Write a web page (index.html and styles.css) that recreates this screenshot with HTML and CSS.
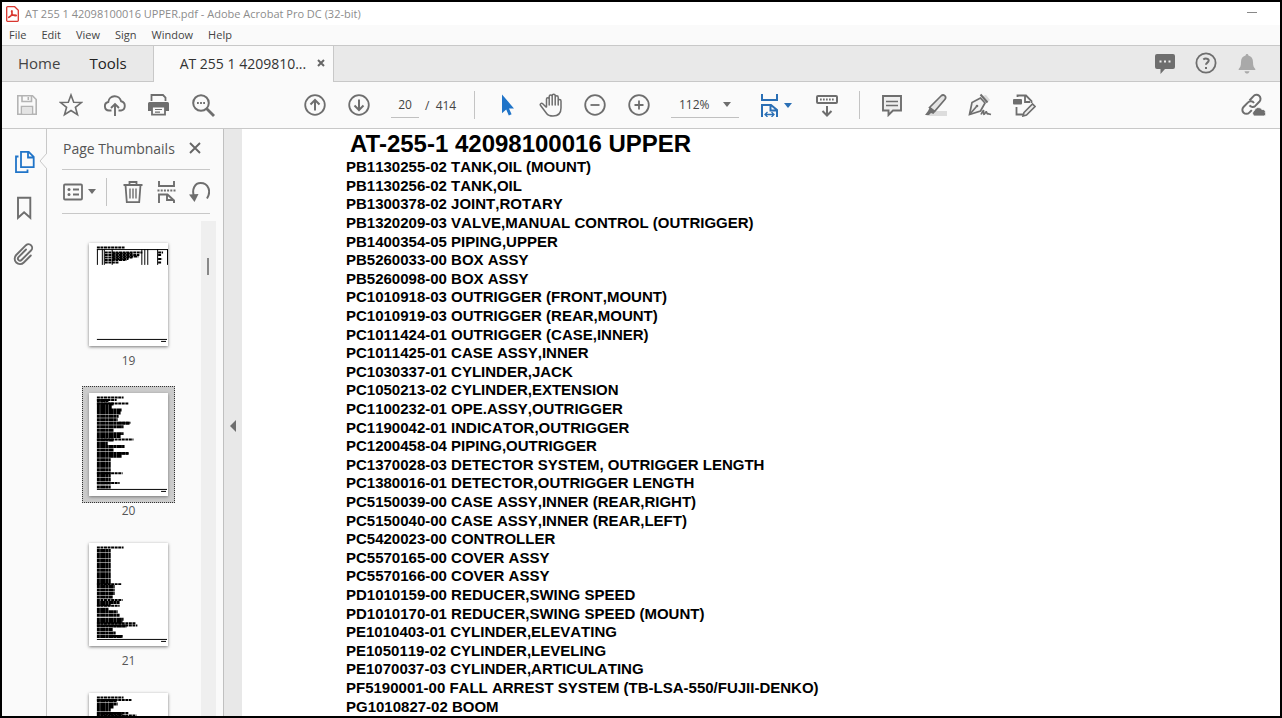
FILE: index.html
```html
<!DOCTYPE html>
<html lang="en">
<head>
<meta charset="utf-8">
<title>AT 255 1 42098100016 UPPER.pdf - Adobe Acrobat Pro DC (32-bit)</title>
<link rel="stylesheet" href="styles.css">
</head>
<body>
<div class="app">
  <header class="titlebar">
    <svg class="app-icon" width="13" height="16" viewBox="0 0 13 16"><path d="M1.500.7h7.200L12.300 4.300v10.200a.8.8 0 0 1-.8.8h-10a.8.8 0 0 1-.8-.8V1.500a.8.8 0 0 1 .8-.8z" fill="#fff" stroke="#d8362f" stroke-width="1.300"/><path d="M3 11.500c1.800-1 3.500-4 3.200-6.300-.2-1-1-.6-.7.6.5 2.100 2.200 3.900 4.200 4 1 0 .9-.9-.3-.9-2.300-.1-4.200.5-6 1.600-.8.500-1 1.200-.4 1z" fill="none" stroke="#d8362f" stroke-width="1.300"/></svg>
    <h1 class="app-title">AT 255 1 42098100016 UPPER.pdf - Adobe Acrobat Pro DC (32-bit)</h1>
    <button class="minimize" aria-label="Minimize"><svg width="10" height="10" viewBox="0 0 10 10"><path d="M0 3.500h10" stroke="#888"/></svg></button>
  </header>
  <nav class="menubar">
    <button>File</button><button>Edit</button><button>View</button><button>Sign</button><button>Window</button><button>Help</button>
  </nav>
  <div class="tabs">
    <button class="tab">Home</button>
    <button class="tab tab-tools">Tools</button>
    <div class="tab-doc">
      <button class="tab-name">AT 255 1 4209810...</button>
      <button class="tab-close" aria-label="Close tab"><svg width="8" height="8" viewBox="0 0 8 8"><path d="M1 1l6 6M7 1L1 7" stroke="#666" stroke-width="2"/></svg></button>
    </div>
    <div class="tab-actions">
      <button class="icon" aria-label="Comments"><svg width="24" height="24" viewBox="0 0 24 24"><path d="M4 3h16a2 2 0 0 1 2 2v11a2 2 0 0 1-2 2h-8l-4.500 5v-5H4a2 2 0 0 1-2-2V5a2 2 0 0 1 2-2z" fill="#6e6e6e"/><path d="M6.500 9.500h2v2h-2zm4.500 0h2v2h-2zm4.500 0h2v2h-2z" fill="#eee"/></svg></button>
      <button class="icon" aria-label="Help"><svg width="24" height="24" viewBox="0 0 24 24" fill="none" stroke="#6e6e6e" stroke-width="1.800"><circle cx="12" cy="12" r="9.600"/><path d="M9.300 8.500c2-1.500 5.400-1.100 5.400 1.100 0 2-2.700 2.100-2.700 4.100" stroke-width="2"/><path d="M11 16h2v2h-2z" fill="#6e6e6e" stroke="none"/></svg></button>
      <button class="icon" aria-label="Notifications"><svg width="24" height="24" viewBox="0 0 24 24" fill="#a9a9a9"><path d="M12 3c.9 0 1.400.6 1.400 1.500 3.200.8 4.600 3.300 4.600 6.500 0 4 .8 5.500 2.300 7v1H3.700v-1C5.200 16.500 6 15 6 11c0-3.200 1.400-5.700 4.600-6.500C10.600 3.600 11.100 3 12 3zM9.500 20.200h5c-.4 1.600-1.400 2.300-2.500 2.300s-2.100-.7-2.500-2.300z"/></svg></button>
    </div>
  </div>
  <div class="toolbar">
    <button class="icon" aria-label="Save"><svg width="24" height="24" viewBox="0 0 24 24" fill="none" stroke="#b4b4b4" stroke-width="1.600"><path d="M2.800 2.800h14.700l3.700 3.700v14.700H2.800z"/><path d="M7 3v5.500h9.500V3M6.500 21v-7.500h11V21"/><path d="M7.300 14.300h9.400v6.200H7.300z" fill="#e4e4e4" stroke="none"/><path d="M13.300 4v3"/></svg></button>
    <button class="icon" aria-label="Star"><svg width="24" height="24" viewBox="0 0 24 24" fill="none" stroke="#6e6e6e" stroke-width="1.600"><path d="M12 2l2.700 7.200 7.700.3-6 4.800 2.100 7.400L12 17.500l-6.500 4.200 2.100-7.400-6-4.800 7.700-.3z"/></svg></button>
    <button class="icon" aria-label="Upload"><svg width="24" height="24" viewBox="0 0 24 24" fill="none" stroke="#6e6e6e" stroke-width="1.900"><path d="M8.500 17.500H6a4.300 4.300 0 0 1-.7-8.500 6.500 6.500 0 0 1 12.800-.7A4.700 4.700 0 0 1 18 17.500h-2.500"/><path d="M12 23V11.500M8 15l4-4 4 4"/></svg></button>
    <button class="icon" aria-label="Print"><svg width="24" height="24" viewBox="0 0 24 24"><path d="M4.500 8V2h11.500l2.500 2.500V8" fill="none" stroke="#6e6e6e" stroke-width="1.800"/><path d="M2.500 9h18a1.500 1.500 0 0 1 1.500 1.500V18H1v-7.500A1.500 1.500 0 0 1 2.500 9z" fill="#6e6e6e"/><path d="M5 13.500h13v8.200H5z" fill="#fafafa" stroke="#6e6e6e" stroke-width="1.800"/><path d="M8 16.500h7m-7 2.700h5" stroke="#6e6e6e" stroke-width="1.200"/></svg></button>
    <button class="icon" aria-label="Find"><svg width="24" height="24" viewBox="0 0 24 24" fill="none" stroke="#6e6e6e"><circle cx="10" cy="10" r="7.800" stroke-width="2"/><path d="M15.500 15.500l7.500 7.500" stroke-width="2.800"/><path d="M6 10h8" stroke-width="1.800" stroke-dasharray="1.800 1.300"/></svg></button>
    <button class="icon page-up" aria-label="Previous page"><svg width="24" height="24" viewBox="0 0 24 24" fill="none" stroke="#6e6e6e" stroke-width="1.800"><circle cx="12" cy="12" r="9.800"/><path d="M12 17.500V7M7.500 11.500L12 7l4.500 4.500" stroke-width="2"/></svg></button>
    <button class="icon" aria-label="Next page"><svg width="24" height="24" viewBox="0 0 24 24" fill="none" stroke="#6e6e6e" stroke-width="1.800"><circle cx="12" cy="12" r="9.800"/><path d="M12 6.500V17M7.500 12.500L12 17l4.500-4.500" stroke-width="2"/></svg></button>
    <div class="page-group"><input class="page-input" type="text" value="20" aria-label="Page number"><span>/&nbsp; 414</span></div>
    <span class="sep"></span>
    <button class="icon" aria-label="Select"><svg width="24" height="24" viewBox="0 0 24 24"><path d="M7 1.500v18.800l4.200-3.700 2.600 5.900 2.800-1.300-2.600-5.700h5z" fill="#2074c8"/></svg></button>
    <button class="icon" aria-label="Hand"><svg width="24" height="24" viewBox="0 0 24 24" fill="none" stroke="#6e6e6e" stroke-width="1.500" stroke-linecap="round" stroke-linejoin="round"><path d="M7 14L3.700 10.700c-1.500-1-3.200.4-2.100 1.800l6 8C9 22.500 11 23 14 23c5 0 8-2.500 8-8V8c0-2-2.800-2-2.800 0v4V4.500c0-2.200-3-2.200-3 0V12 2.700c0-2.100-3-2.100-3 0V12 3.500c0-2-3-2-3 0V12 6c0-1.800-2.700-1.800-2.700 0v8"/></svg></button>
    <button class="icon" aria-label="Zoom out"><svg width="24" height="24" viewBox="0 0 24 24" fill="none" stroke="#6e6e6e" stroke-width="1.800"><circle cx="12" cy="12" r="9.800"/><path d="M7.500 12h9"/></svg></button>
    <button class="icon" aria-label="Zoom in"><svg width="24" height="24" viewBox="0 0 24 24" fill="none" stroke="#6e6e6e" stroke-width="1.800"><circle cx="12" cy="12" r="9.800"/><path d="M7.500 12h9M12 7.500v9"/></svg></button>
    <label class="zoom"><select class="zoom-select" aria-label="Zoom level"><option>112%</option></select><svg width="8" height="5" viewBox="0 0 8 5"><path d="M0 0h8L4 5z" fill="#6e6e6e"/></svg></label>
    <button class="fit" aria-label="Fit width"><svg width="22" height="24" viewBox="0 0 22 24" fill="none" stroke="#2a6fb5" stroke-width="2"><path d="M3 1v6h15V1M3 24V12h9l6 5v7M11.500 12v5.500H18"/><path d="M6 21.500h9M8.500 19L6 21.500 8.500 24M12.500 19l2.500 2.500-2.500 2.500" stroke-width="1.300"/></svg><svg width="8" height="5" viewBox="0 0 8 5"><path d="M0 0h8L4 5z" fill="#2a6fb5"/></svg></button>
    <button class="icon" aria-label="Read mode"><svg width="24" height="24" viewBox="0 0 24 24" fill="none" stroke="#6e6e6e" stroke-width="2"><rect x="2" y="3" width="20" height="7" rx="1"/><path d="M5 6.500h14" stroke-dasharray="1.700 1.300"/><path d="M12 13v9M7.500 18l4.500 4.500 4.500-4.500"/></svg></button>
    <span class="sep"></span>
    <button class="icon" aria-label="Comment"><svg width="24" height="24" viewBox="0 0 24 24" fill="#eee" stroke="#6e6e6e" stroke-width="1.900"><path d="M3 3h18v14.500h-8L8.500 22v-4.500H3z"/><path d="M6 8.500h12M6 12.500h12" stroke-width="1.300"/></svg></button>
    <button class="icon" aria-label="Highlight"><svg width="24" height="24" viewBox="0 0 24 24"><path d="M8 18h15v5H2z" fill="#dcdcdc"/><path d="M5.500 14.500L17 3c2.500-2.400 6 .4 4 3.300L10.500 18.500z" fill="#e4e4e4" stroke="#6e6e6e" stroke-width="1.700"/><path d="M6 14l5 4-1.500 3L7 20l-2 2H1l3-4z" fill="#6e6e6e"/></svg></button>
    <button class="icon" aria-label="Sign"><svg width="24" height="24" viewBox="0 0 24 24" fill="none" stroke="#6e6e6e" stroke-width="1.700"><path d="M14 3l4-1 4 5-4 3z" fill="#dcdcdc" stroke="none"/><path d="M12.500 1.500l7 8" stroke-width="2"/><path d="M12.500 5L4 9.500 1.500 21.500l11-3.500L17 10z" fill="#f2f2f2"/><path d="M2 21l6.500-7.500"/><circle cx="9" cy="13" r="1.300" fill="#6e6e6e" stroke="none"/><path d="M13 21.500c2-4.500 3-5 2.500-2.300s.5 3 2 .3 1 2.500 2.500 1.200l3 .8" stroke-width="1.600"/></svg></button>
    <button class="icon" aria-label="Edit document"><svg width="24" height="24" viewBox="0 0 24 24" fill="none" stroke="#6e6e6e" stroke-width="1.800"><path d="M5.500 4V2.500H14l5.500 5.500v2M13 2.500v6.500h5M4.500 14v7.500H11"/><rect x="1" y="6" width="9" height="5.500" rx="1" fill="#6e6e6e" stroke="none"/><path d="M12 19.500l8.500-8.500 2.500 2.500-8.500 8.500-3.500 1z" fill="#eee" stroke-width="1.600"/></svg></button>
    <button class="icon share" aria-label="Share link"><svg width="26" height="24" viewBox="0 0 26 24" fill="none" stroke="#6e6e6e" stroke-width="2"><path d="M9.500 7.500l4-4.300a4 4 0 0 1 6 5.300l-4.200 4.400a4 4 0 0 1-5.800-.5"/><path d="M14 10a4 4 0 0 0-6.200-.4L3.500 14a4 4 0 0 0 5.800 5.600l2.500-2.500"/><path d="M14.500 23a2.800 2.800 0 0 1-.3-5.200 4.300 4.300 0 0 1 7.800-1.300c2.700-.3 3.800 1.500 3.200 3 1 1.500.3 3.500-1.400 3.500z" fill="#6e6e6e" stroke="#fafafa" stroke-width=".8"/></svg></button>
  </div>
  <main class="workspace">
    <aside class="rail">
      <button class="icon" aria-label="Page thumbnails"><svg width="24" height="24" viewBox="0 0 24 24" fill="none" stroke="#2074c8" stroke-width="1.800"><path d="M9 1.800h7.700l5 5v10.400H9zM16 2v5.500h5.500"/><path d="M6.500 6.500H4v15.700h11.500V19.500"/></svg></button>
      <button class="icon" aria-label="Bookmarks"><svg width="24" height="24" viewBox="0 0 24 24" fill="none" stroke="#6e6e6e" stroke-width="1.900"><path d="M6 1.800h12.300v20l-6.200-5.500L6 21.800z"/></svg></button>
      <button class="icon" aria-label="Attachments"><svg width="24" height="24" viewBox="0 0 24 24" fill="none" stroke="#6e6e6e" stroke-width="1.900" stroke-linecap="round"><path d="M14 7.500l-7.500 7.700a2 2 0 0 0 3 2.800L19 8.500a3.600 3.600 0 0 0-5-5.300L4.200 13a5.300 5.300 0 0 0 7.600 7.500l7-7"/></svg></button>
      <svg class="notch" width="8" height="16" viewBox="0 0 8 16"><path d="M8 0L1 8l7 8" fill="#fafafa" stroke="#c8c8c8"/></svg>
    </aside>
    <section class="panel">
      <div class="panel-head">
        <h2 class="panel-title">Page Thumbnails</h2>
        <button class="panel-close" aria-label="Close panel"><svg width="12" height="12" viewBox="0 0 12 12"><path d="M1 1l10 10M11 1L1 11" stroke="#666" stroke-width="1.900"/></svg></button>
      </div>
      <div class="panel-tools">
        <button class="options" aria-label="Options"><svg width="20" height="18" viewBox="0 0 20 18" fill="none" stroke="#6e6e6e" stroke-width="1.800"><rect x="1" y="1.500" width="18" height="15" rx="1"/><path d="M10 6.500h6M10 11.500h6"/><circle cx="6" cy="6.500" r="1.500" fill="#6e6e6e" stroke="none"/><circle cx="6" cy="11.500" r="1.500" fill="#6e6e6e" stroke="none"/></svg><svg width="8" height="5" viewBox="0 0 8 5"><path d="M0 0h8L4 5z" fill="#6e6e6e"/></svg></button>
        <span class="sep"></span>
        <button class="icon first-tool" aria-label="Delete pages"><svg width="24" height="24" viewBox="0 0 24 24" fill="none" stroke="#6e6e6e" stroke-width="1.800"><path d="M2.500 5h19M8.500 5V2h7v3M4.500 5l1.300 17.200h12.400L19.500 5"/><path d="M9 8.500v10M12 8.500v10M15 8.500v10" stroke-width="1.400"/></svg></button>
        <button class="icon" aria-label="Split pages"><svg width="24" height="24" viewBox="0 0 24 24" fill="none" stroke="#6e6e6e" stroke-width="1.900"><path d="M4 1v5h15V1M4 23v-8.500h8.500l6.500 6V23M12 14.500V20h6"/><path d="M2.500 10.500h18" stroke-dasharray="2 1.200"/></svg></button>
        <button class="icon" aria-label="Rotate"><svg width="24" height="24" viewBox="0 0 24 24" fill="none" stroke="#6e6e6e" stroke-width="2"><path d="M5 16.500C2.500 9 6 3 11.500 3c8 0 11 8.500 6.500 15.500"/><path d="M0 14.500l9.500-.5L5.500 22z" fill="#6e6e6e" stroke="none"/></svg></button>
      </div>
      <div class="panel-body">
        <div class="thumbs">
          <figure class="thumb"><div class="thumb-box"><svg class="sheet" viewBox="0 0 80 104"><path class="thin" d="M8 4.500h28M16 9.500h38M16 12h35M16 14.500h28M16 17h22M16 19.500h14M70 9.500h5M70 12h3M70 16h4M70 19.500h3"/><path class="thin" d="M24 10.500h20M24 13.500h26M24 16h16"/><path class="rule" d="M8 6.500h72M8 97.500h71M8.500 6v16M13.500 6v16M15.500 6v16M23.500 6v16M53.500 6v16M56.500 6v16M59.500 6v16M69.500 6v16M79.500 6v16"/><path class="tiny" d="M73 99.500h5"/></svg></div><figcaption>19</figcaption></figure>
          <figure class="thumb selected"><div class="thumb-box"><svg class="sheet" viewBox="0 0 80 104"><path class="thin" d="M8 4.500h27M8 7h20M8 10.500h32M8 47h37M8 81h26M8 91h23M30 61h10M30 30h12"/><path class="ink" d="M8 7.500h12M8 11h17M8 14h15M8 17h25M8 20h24M8 23.500h22M8 27h21M8 30.500h33M8 34h27M8 37.500h17M8 41h27M8 44h24M8 47.500h17M8 51h11M8 54h28M8 57.500h17M8 61h32M8 64h25M8 67.500h14M8 71h14M8 74h14M8 77.500h14M8 81h14M8 84h14M8 87.500h14M8 91h14M8 95h14"/><path class="rule" d="M8 97.500h71"/><path class="tiny" d="M73 99.500h5"/></svg></div><figcaption>20</figcaption></figure>
          <figure class="thumb"><div class="thumb-box"><svg class="sheet" viewBox="0 0 80 104"><path class="thin" d="M8 4.500h27M8 41.500h25M8 57.500h26M8 63.500h23M8 81h39M8 83.500h41M20 94h14"/><path class="ink" d="M8 7.500h14M8 11h14M8 14h14M8 17.500h14M8 21h14M8 24h14M8 27.500h14M8 31h14M8 34h14M8 37.500h14M8 40.500h14M8 44h18M8 47.500h18M8 51h18M8 54.500h16M8 60h23M8 62.500h14M8 67h12M8 69.500h21M8 73h23M8 77h27M8 80h26M8 84h30M8 87.500h16M8 91h19M8 94.500h26"/><path class="rule" d="M8 97.500h71"/><path class="tiny" d="M73 99.500h5"/></svg></div><figcaption>21</figcaption></figure>
          <figure class="thumb"><div class="thumb-box"><svg class="sheet" viewBox="0 0 80 104"><path class="thin" d="M8 4.500h27M8 7h35M8 20h32M8 22.500h40"/><path class="ink" d="M8 7.500h20M8 11h21M8 14h17M8 17h14M8 20.500h26M8 24h30M8 28h20M8 32h24"/></svg></div></figure>
        </div>
        <div class="track"><div class="track-thumb"></div></div>
      </div>
    </section>
    <button class="collapse" aria-label="Collapse panel"><svg width="6" height="12" viewBox="0 0 6 12"><path d="M6 0v12L0 6z" fill="#6e6e6e"/></svg></button>
    <article class="document">
      <h2 class="doc-title">AT-255-1 42098100016 UPPER</h2>
      <ul class="parts">
        <li>PB1130255-02 TANK,OIL (MOUNT)</li>
        <li>PB1130256-02 TANK,OIL</li>
        <li>PB1300378-02 JOINT,ROTARY</li>
        <li>PB1320209-03 VALVE,MANUAL CONTROL (OUTRIGGER)</li>
        <li>PB1400354-05 PIPING,UPPER</li>
        <li>PB5260033-00 BOX ASSY</li>
        <li>PB5260098-00 BOX ASSY</li>
        <li>PC1010918-03 OUTRIGGER (FRONT,MOUNT)</li>
        <li>PC1010919-03 OUTRIGGER (REAR,MOUNT)</li>
        <li>PC1011424-01 OUTRIGGER (CASE,INNER)</li>
        <li>PC1011425-01 CASE ASSY,INNER</li>
        <li>PC1030337-01 CYLINDER,JACK</li>
        <li>PC1050213-02 CYLINDER,EXTENSION</li>
        <li>PC1100232-01 OPE.ASSY,OUTRIGGER</li>
        <li>PC1190042-01 INDICATOR,OUTRIGGER</li>
        <li>PC1200458-04 PIPING,OUTRIGGER</li>
        <li>PC1370028-03 DETECTOR SYSTEM, OUTRIGGER LENGTH</li>
        <li>PC1380016-01 DETECTOR,OUTRIGGER LENGTH</li>
        <li>PC5150039-00 CASE ASSY,INNER (REAR,RIGHT)</li>
        <li>PC5150040-00 CASE ASSY,INNER (REAR,LEFT)</li>
        <li>PC5420023-00 CONTROLLER</li>
        <li>PC5570165-00 COVER ASSY</li>
        <li>PC5570166-00 COVER ASSY</li>
        <li>PD1010159-00 REDUCER,SWING SPEED</li>
        <li>PD1010170-01 REDUCER,SWING SPEED (MOUNT)</li>
        <li>PE1010403-01 CYLINDER,ELEVATING</li>
        <li>PE1050119-02 CYLINDER,LEVELING</li>
        <li>PE1070037-03 CYLINDER,ARTICULATING</li>
        <li>PF5190001-00 FALL ARREST SYSTEM (TB-LSA-550/FUJII-DENKO)</li>
        <li>PG1010827-02 BOOM</li>
      </ul>
    </article>
  </main>
</div>
</body>
</html>
```

FILE: styles.css
```css
* { box-sizing: border-box; }
body { margin: 0; font-family: "Open Sans", "Noto Sans", sans-serif; font-size: 12px; color: #444; }
h1, h2, ul, figure { margin: 0; padding: 0; }
button, input, select { margin: 0; padding: 0; border: 0; background: none; font: inherit; color: inherit; }
svg { display: block; flex: none; }

.app { display: flex; flex-direction: column; height: 100vh; border: 2px solid #000; background: #fafafa; overflow: hidden; }
.titlebar { display: flex; align-items: center; height: 23px; flex: none; padding: 0 23px 0 4px; background: #fff; }
.app-title { flex: 1; margin-left: 6px; font-size: 11px; font-weight: normal; color: #8c8c8c; white-space: nowrap; }
.menubar { display: flex; align-items: center; gap: 15px; height: 20px; flex: none; padding: 0 7px 2px; font-size: 11px; }

.tabs { display: flex; height: 37px; flex: none; background: #e9e9e9; border-top: 1px solid #c8c8c8; box-shadow: inset 0 -1px #c8c8c8; font-size: 15px; }
.tab { padding: 0 0 2px 16px; text-align: left; }
.tab-tools { padding-left: 29px; color: #222; }
.tab-doc { display: flex; align-items: center; justify-content: space-between; width: 181px; margin-left: 26px; padding: 0 8px 2px 26px; background: #fafafa; border: 1px solid #c8c8c8; border-width: 0 1px; color: #333; font-size: 14px; }
.tab-actions { display: flex; align-items: center; gap: 17px; margin-left: auto; padding: 0 21px 2px 0; }
.icon { display: flex; align-items: center; justify-content: center; width: 24px; height: 24px; flex: none; }

.toolbar { display: flex; align-items: center; gap: 20px; height: 47px; flex: none; padding: 0 15px 0 13px; border-bottom: 1px solid #c8c8c8; }
.page-up { margin-left: 68px; }
.page-group { display: flex; align-items: center; gap: 6px; width: 63px; white-space: nowrap; }
.page-input { width: 28px; height: 26px; text-align: center; border-bottom: 1px solid #c0c0c0; }
.sep { width: 1px; height: 28px; background: #c4c4c4; flex: none; }
.zoom { display: flex; align-items: center; width: 68px; height: 26px; padding: 0 8px; border-bottom: 1px solid #c0c0c0; }
.zoom-select { appearance: none; flex: 1; min-width: 0; }
.fit { display: flex; align-items: center; justify-content: space-between; width: 36px; padding-right: 3px; }
.share { margin-left: auto; }

.workspace { display: flex; flex: 1; min-height: 0; }
.rail { position: relative; display: flex; flex-direction: column; align-items: center; gap: 22px; width: 45px; flex: none; padding-top: 21px; border-right: 1px solid #c8c8c8; }
.notch { position: absolute; right: -1px; top: 24px; }
.panel { display: flex; flex-direction: column; width: 177px; flex: none; border-right: 1px solid #c0c0c0; }
.panel-head, .panel-tools { display: flex; align-items: center; flex: none; margin: 0 13px 0 15px; border-bottom: 1px solid #c8c8c8; }
.panel-head { height: 41px; justify-content: space-between; padding: 0 9px 2px 1px; }
.panel-title { font-size: 14px; font-weight: normal; color: #555; white-space: nowrap; }
.panel-tools { height: 44px; gap: 10px; padding-left: 1px; overflow: hidden; }
.options { display: flex; align-items: center; gap: 5px; flex: none; }
.first-tool { margin-left: 4px; }
.panel-body { display: flex; flex: 1; min-height: 0; }
.thumbs { display: flex; flex-direction: column; align-items: center; gap: 17px; flex: 1; padding: 22px 0 0 9px; overflow: hidden; }
.thumb { flex: none; text-align: center; line-height: 16px; color: #555; }
.thumb-box { padding: 6px; border: 1px solid transparent; }
.selected .thumb-box { background: #cbcbcb; border: 1px dotted #333; }
.sheet { width: 79px; height: 103px; background: #fff; box-shadow: 0 1px 3px #777; }
.ink { fill: none; stroke: #000; stroke-width: 3; stroke-dasharray: 3 .3 5 .2; }
.thin { fill: none; stroke: #000; stroke-width: 2; stroke-dasharray: 3 .6; }
.rule { fill: none; stroke: #000; stroke-width: 1; }
.tiny { fill: none; stroke: #000; stroke-width: 1; }
.track { width: 15px; flex: none; margin: 7px 7px 0 0; padding: 37px 0 0 6px; background: #efefef; }
.track-thumb { width: 2px; height: 17px; background: #888; }
.collapse { display: flex; align-items: center; justify-content: center; width: 18px; flex: none; padding-top: 6px; background: #e8e8e8; }

.document { display: flex; flex-direction: column; flex: 1; min-width: 0; padding-top: 1px; background: #fff; color: #000; font-family: "Liberation Sans", Arial, sans-serif; font-weight: bold; }
.doc-title { padding-left: 108px; font-size: 24px; line-height: 28px; white-space: nowrap; }
.parts { display: flex; flex-direction: column; flex: 1; padding-left: 104px; list-style: none; font-size: 15px; line-height: 18px; font-kerning: none; white-space: nowrap; }
.parts li { display: flex; align-items: center; flex: 1; }
```
